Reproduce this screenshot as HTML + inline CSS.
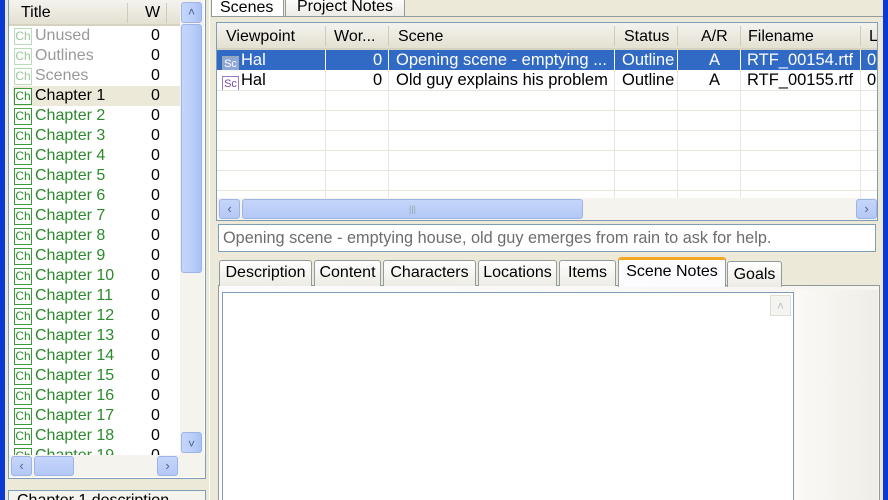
<!DOCTYPE html>
<html><head><meta charset="utf-8"><style>
*{box-sizing:border-box;margin:0;padding:0}
html,body{width:888px;height:500px;overflow:hidden}
body{background:#ece9d8;font-family:"Liberation Sans",sans-serif;font-size:16px;position:relative;color:#000}
.a{position:absolute}
.bl{background:#0a3ad6}
.hdr{background:linear-gradient(#f4f3ee,#e4e1d2);border-bottom:2px solid #d6d2c2}
.sbv{background:linear-gradient(90deg,#c6d6fb,#b8cdf8 60%,#a9c0f3);border:1px solid #9eb4e6;border-radius:3px}
.sbh{background:linear-gradient(#c6d6fb,#b3c8f6);border:1px solid #9eb4e6;border-radius:3px}
.row{position:absolute;left:14px;height:20px;width:166px;display:flex;align-items:center;color:#2c8a2c;white-space:nowrap}
.ic{display:inline-block;flex:none;width:18px;height:17px;border:1px solid #3a9a3a;font-size:12px;line-height:15px;text-align:center;margin-right:3px;color:#2c8a2c;background:#fff}
.row .n{position:absolute;left:137px;color:#000}
.gray{color:#999}.gray .ic{border-color:#b8dcb8;color:#9cc79c}
.gl{position:absolute;top:0;width:1px;background:#e8e6dc}
.tab{position:absolute;height:26px;background:linear-gradient(#fff,#ecebe4);border:1px solid #919b9c;border-bottom:none;border-radius:3px 3px 0 0;line-height:24px;text-align:center;font-size:16px;white-space:nowrap}
.cell{position:absolute;height:20px;line-height:20px;white-space:nowrap;overflow:hidden;font-size:16.5px}
.sc{display:inline-block;width:17px;height:16px;font-size:11px;line-height:14px;text-align:center;vertical-align:-2px;margin-right:2px}
</style></head><body>
<div class="a bl" style="left:0;top:0;width:5px;height:500px"></div>
<div class="a bl" style="left:883px;top:0;width:5px;height:500px"></div>

<div class="a" style="left:8px;top:0;width:198px;height:479px;border:1px solid #7f9db9;border-top:none;background:#fff"></div>
<div class="a hdr" style="left:9px;top:0;width:171px;height:26px"></div>
<div class="a" style="left:21px;top:4px;font-size:16px">Title</div>
<div class="a" style="left:127px;top:3px;width:1px;height:20px;background:#cfcbbb"></div>
<div class="a" style="left:145px;top:4px;font-size:16px">W</div>
<div class="a" style="left:166px;top:3px;width:1px;height:20px;background:#cfcbbb"></div>
<div class="a" style="left:13px;top:86px;width:167px;height:20px;background:#ece9d8"></div>
<div class="row gray" style="top:26px"><span class="ic">Ch</span>Unused<span class="n">0</span></div>
<div class="row gray" style="top:46px"><span class="ic">Ch</span>Outlines<span class="n">0</span></div>
<div class="row gray" style="top:66px"><span class="ic">Ch</span>Scenes<span class="n">0</span></div>
<div class="row" style="top:86px;color:#000"><span class="ic">Ch</span>Chapter 1<span class="n">0</span></div>
<div class="row" style="top:106px"><span class="ic">Ch</span>Chapter 2<span class="n">0</span></div>
<div class="row" style="top:126px"><span class="ic">Ch</span>Chapter 3<span class="n">0</span></div>
<div class="row" style="top:146px"><span class="ic">Ch</span>Chapter 4<span class="n">0</span></div>
<div class="row" style="top:166px"><span class="ic">Ch</span>Chapter 5<span class="n">0</span></div>
<div class="row" style="top:186px"><span class="ic">Ch</span>Chapter 6<span class="n">0</span></div>
<div class="row" style="top:206px"><span class="ic">Ch</span>Chapter 7<span class="n">0</span></div>
<div class="row" style="top:226px"><span class="ic">Ch</span>Chapter 8<span class="n">0</span></div>
<div class="row" style="top:246px"><span class="ic">Ch</span>Chapter 9<span class="n">0</span></div>
<div class="row" style="top:266px"><span class="ic">Ch</span>Chapter 10<span class="n">0</span></div>
<div class="row" style="top:286px"><span class="ic">Ch</span>Chapter 11<span class="n">0</span></div>
<div class="row" style="top:306px"><span class="ic">Ch</span>Chapter 12<span class="n">0</span></div>
<div class="row" style="top:326px"><span class="ic">Ch</span>Chapter 13<span class="n">0</span></div>
<div class="row" style="top:346px"><span class="ic">Ch</span>Chapter 14<span class="n">0</span></div>
<div class="row" style="top:366px"><span class="ic">Ch</span>Chapter 15<span class="n">0</span></div>
<div class="row" style="top:386px"><span class="ic">Ch</span>Chapter 16<span class="n">0</span></div>
<div class="row" style="top:406px"><span class="ic">Ch</span>Chapter 17<span class="n">0</span></div>
<div class="row" style="top:426px"><span class="ic">Ch</span>Chapter 18<span class="n">0</span></div>
<div class="a" style="left:9px;top:446px;width:171px;height:9px;overflow:hidden"><div class="row" style="left:5px;top:0"><span class="ic">Ch</span>Chapter 19<span class="n">0</span></div></div>
<div class="a" style="left:180px;top:0;width:24px;height:455px;background:#f4f3ee"></div>
<div class="a sbv" style="left:181px;top:2px;width:21px;height:21px;text-align:center;color:#4d6185;font-size:12px;line-height:18px">&#708;</div>
<div class="a sbv" style="left:181px;top:24px;width:21px;height:249px"></div>
<div class="a sbv" style="left:181px;top:432px;width:21px;height:21px;text-align:center;color:#4d6185;font-size:12px;line-height:22px">&#709;</div>
<div class="a" style="left:9px;top:455px;width:196px;height:22px;background:#f4f3ee"></div>
<div class="a sbh" style="left:11px;top:456px;width:21px;height:20px;color:#4d6185;text-align:center;font-size:13px;line-height:18px">&lsaquo;</div>
<div class="a sbh" style="left:34px;top:456px;width:40px;height:20px"></div>
<div class="a sbh" style="left:157px;top:456px;width:21px;height:20px;color:#4d6185;text-align:center;font-size:13px;line-height:18px">&rsaquo;</div>
<div class="a" style="left:8px;top:490px;width:198px;height:10px;border:1px solid #7f9db9;border-bottom:none;background:#f4f3ee;overflow:hidden"><div style="position:absolute;left:8px;top:1px;font-size:16px;white-space:nowrap">Chapter 1 description</div></div>
<div class="a" style="left:209px;top:0;width:1px;height:500px;background:#fff"></div>

<div class="a" style="left:211px;top:-4px;width:73px;height:21px;background:#fff;border:1px solid #919b9c;line-height:21px;padding-left:8px;font-size:16px">Scenes</div>
<div class="tab" style="left:285px;top:-5px;width:120px;height:22px;line-height:22px">Project Notes</div>
<div class="a" style="left:211px;top:16px;width:672px;height:1px;background:#919b9c"></div>

<div class="a" style="left:216px;top:22px;width:662px;height:199px;border:1px solid #7f9db9;background:#fff;overflow:hidden">
 <div class="gl" style="left:108px;height:175px"></div>
 <div class="gl" style="left:171px;height:175px"></div>
 <div class="gl" style="left:397px;height:175px"></div>
 <div class="gl" style="left:460px;height:175px"></div>
 <div class="gl" style="left:523px;height:175px"></div>
 <div class="gl" style="left:643px;height:175px"></div>
 <div class="a" style="left:0;top:67px;width:662px;height:1px;background:#e8e6dc"></div>
 <div class="a" style="left:0;top:87px;width:662px;height:1px;background:#e8e6dc"></div>
 <div class="a" style="left:0;top:107px;width:662px;height:1px;background:#e8e6dc"></div>
 <div class="a" style="left:0;top:127px;width:662px;height:1px;background:#e8e6dc"></div>
 <div class="a" style="left:0;top:147px;width:662px;height:1px;background:#e8e6dc"></div>
 <div class="a" style="left:0;top:167px;width:662px;height:1px;background:#e8e6dc"></div>
 <div class="a hdr" style="left:0;top:0;width:662px;height:27px;font-size:16px;line-height:27px">
  <span class="a" style="left:9px">Viewpoint</span><span class="a" style="left:108px;top:3px;height:20px;width:1px;background:#cfcbbb"></span>
  <span class="a" style="left:117px">Wor...</span><span class="a" style="left:171px;top:3px;height:20px;width:1px;background:#cfcbbb"></span>
  <span class="a" style="left:181px">Scene</span><span class="a" style="left:397px;top:3px;height:20px;width:1px;background:#cfcbbb"></span>
  <span class="a" style="left:407px">Status</span><span class="a" style="left:460px;top:3px;height:20px;width:1px;background:#cfcbbb"></span>
  <span class="a" style="left:484px">A/R</span><span class="a" style="left:523px;top:3px;height:20px;width:1px;background:#cfcbbb"></span>
  <span class="a" style="left:531px">Filename</span><span class="a" style="left:643px;top:3px;height:20px;width:1px;background:#cfcbbb"></span>
  <span class="a" style="left:652px">L</span>
 </div>
 <div class="a" style="left:0;top:27px;width:662px;height:20px;background:#316ac5;color:#fff">
  <span class="cell" style="left:5px;top:0"><span class="sc" style="border:1px solid #9aa;background:#8fa7d8;color:#fff">Sc</span>Hal</span>
  <div class="gl" style="left:108px;height:20px;background:#fff"></div><div class="gl" style="left:171px;height:20px;background:#fff"></div><div class="gl" style="left:397px;height:20px;background:#fff"></div><div class="gl" style="left:460px;height:20px;background:#fff"></div><div class="gl" style="left:523px;height:20px;background:#fff"></div><div class="gl" style="left:643px;height:20px;background:#fff"></div>
  <span class="cell" style="left:156px">0</span>
  <span class="cell" style="left:179px;width:216px">Opening scene - emptying ...</span>
  <span class="cell" style="left:405px">Outline</span>
  <span class="cell" style="left:492px">A</span>
  <span class="cell" style="left:530px">RTF_00154.rtf</span>
  <span class="cell" style="left:650px">0</span>
 </div>
 <div class="a" style="left:0;top:47px;width:662px;height:20px">
  <span class="cell" style="left:5px;top:0"><span class="sc" style="border:1px solid #a07ac0;color:#7a4aa0">Sc</span>Hal</span>
  <span class="cell" style="left:156px">0</span>
  <span class="cell" style="left:179px;width:216px">Old guy explains his problem</span>
  <span class="cell" style="left:405px">Outline</span>
  <span class="cell" style="left:492px">A</span>
  <span class="cell" style="left:530px">RTF_00155.rtf</span>
  <span class="cell" style="left:650px">0</span>
 </div>
 <div class="a" style="left:0;top:175px;width:662px;height:22px;background:#f4f3ee"></div>
 <div class="a sbh" style="left:2px;top:176px;width:21px;height:20px;color:#4d6185;text-align:center;font-size:13px;line-height:18px">&lsaquo;</div>
 <div class="a sbh" style="left:25px;top:176px;width:341px;height:20px;text-align:center;color:#8aa;font-size:9px;line-height:18px">|||</div>
 <div class="a sbh" style="left:639px;top:176px;width:21px;height:20px;color:#4d6185;text-align:center;font-size:13px;line-height:18px">&rsaquo;</div>
</div>

<div class="a" style="left:218px;top:224px;width:658px;height:28px;border:1px solid #7f9db9;background:#fff;color:#6d6d6d;line-height:26px;padding-left:4px;font-size:16.3px;white-space:nowrap;overflow:hidden">Opening scene - emptying house, old guy emerges from rain to ask for help.</div>

<div class="a" style="left:218px;top:285px;width:662px;height:220px;border:1px solid #919b9c;background:linear-gradient(90deg,#fcfcfe,#f6f5f0)"></div>
<div class="tab" style="left:219px;top:260px;width:93px">Description</div>
<div class="tab" style="left:314px;top:260px;width:67px">Content</div>
<div class="tab" style="left:383px;top:260px;width:93px">Characters</div>
<div class="tab" style="left:478px;top:260px;width:79px">Locations</div>
<div class="tab" style="left:559px;top:260px;width:57px">Items</div>
<div class="tab" style="left:618px;top:257px;width:108px;height:30px;background:#fcfcfe;border-top:3px solid #f6a623;line-height:24px">Scene Notes</div>
<div class="tab" style="left:727px;top:261px;width:55px;line-height:26px">Goals</div>
<div class="a" style="left:222px;top:292px;width:572px;height:210px;border:1px solid #7f9db9;background:#fff"></div>
<div class="a" style="left:770px;top:295px;width:21px;height:21px;border:1px solid #dcdcd8;background:#f4f4f0;color:#bbb;text-align:center;font-size:12px;line-height:20px">&#708;</div>
<div class="a" style="left:795px;top:290px;width:83px;height:210px;background:linear-gradient(90deg,#fbfaf6,#eeede6)"></div>
</body></html>
